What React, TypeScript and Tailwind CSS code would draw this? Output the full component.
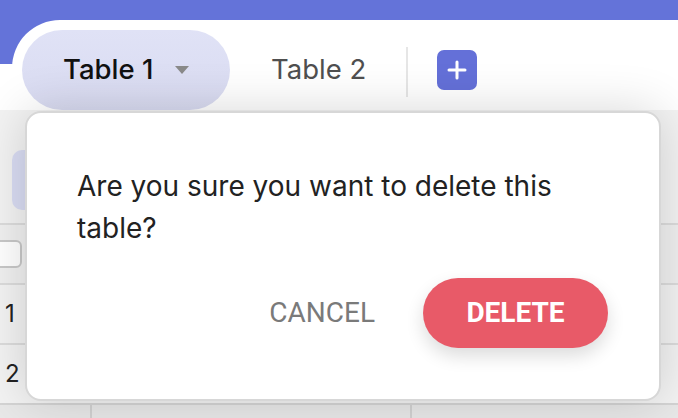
import React from "react";

export default function App() {
  return (
    <div
      className="relative w-[678px] h-[418px] overflow-hidden bg-white flex flex-col"
      style={{ fontFamily: "Inter, 'Noto Sans', sans-serif" }}
    >
      <div className="h-[64px] shrink-0 bg-[#6473d9]" />
      {/* tab bar */}
      <div className="-mt-[44px] ml-[12px] h-[90px] shrink-0 rounded-tl-[48px] bg-white flex items-start pl-[10px] pt-[10px]">
        <div className="h-[80px] w-[208px] rounded-full bg-[linear-gradient(#e0e2f6,#d9dbf1)] flex items-center pl-[41px]">
          <span className="text-[27.5px] font-medium text-[#111] leading-none">Table 1</span>
          <svg className="ml-[22px]" width="14" height="9" viewBox="0 0 14 9">
            <path d="M0 0 L14 0 L7 8 Z" fill="#8a8a8a" />
          </svg>
        </div>
        <div className="h-[80px] flex items-center pl-[41px] pr-[40px]">
          <span className="text-[27.5px] text-[#4f4f4f] leading-none">Table 2</span>
        </div>
        <div className="mt-[17px] w-[2px] h-[50px] bg-[#e6e6e6]" />
        <div className="ml-[29px] mt-[20px] w-[40px] h-[40px] rounded-[7px] bg-[#6470d8] flex items-center justify-center">
          <svg width="20" height="20" viewBox="0 0 20 20">
            <path d="M10 2 V18 M2 10 H18" stroke="white" strokeWidth="3" strokeLinecap="round" />
          </svg>
        </div>
      </div>
      {/* content behind */}
      <div className="flex-1 bg-[#f3f3f3] flex flex-col">
        <div className="h-[113px] shrink-0 pl-[12px] pt-[40px]">
          <div className="w-[80px] h-[60px] rounded-[10px] bg-[#d9dcf3]" />
        </div>
        <div className="h-[60px] shrink-0 border-t-2 border-[#dcdcdc] bg-[#f0f0f0] flex items-center">
          <div className="-ml-[8px] w-[30px] h-[28px] rounded-[6px] border-2 border-[#c8c8c8] bg-white" />
        </div>
        <div className="h-[60px] shrink-0 border-t-2 border-[#dcdcdc] flex items-center pl-[5px]">
          <span className="text-[24px] text-[#222]">1</span>
        </div>
        <div className="h-[60px] shrink-0 border-t-2 border-[#dcdcdc] flex items-center pl-[5px]">
          <span className="text-[24px] text-[#222]">2</span>
        </div>
        <div className="flex-1 border-t-2 border-[#d4d4d4] bg-[#e8e8e8] flex">
          <div className="w-[92px] border-r-2 border-[#d2d2d2]" />
          <div className="w-[320px] border-r-2 border-[#d2d2d2]" />
        </div>
      </div>

      {/* dialog */}
      <div className="absolute left-[25px] top-[111px] w-[636px] h-[290px] rounded-[16px] border-2 border-[#d7d7d7] bg-white shadow-[0_0_50px_rgba(0,0,0,0.16)] pl-[50px] pr-[51px] pt-[52px]">
        <p className="text-[28px] leading-[42px] text-[#222] w-[520px]">
          Are you sure you want to delete this table?
        </p>
        <div
          className="mt-[29px] flex justify-end items-center"
          style={{ fontFamily: "Roboto, 'Liberation Sans', sans-serif" }}
        >
          <button className="text-[28px] text-[#7a7a7a] mr-[48px] leading-none">CANCEL</button>
          <button className="w-[185px] h-[70px] rounded-full bg-[#e85a68] text-white text-[28px] font-bold leading-none shadow-[0_8px_18px_rgba(0,0,0,0.14)]">
            DELETE
          </button>
        </div>
      </div>
    </div>
  );
}
